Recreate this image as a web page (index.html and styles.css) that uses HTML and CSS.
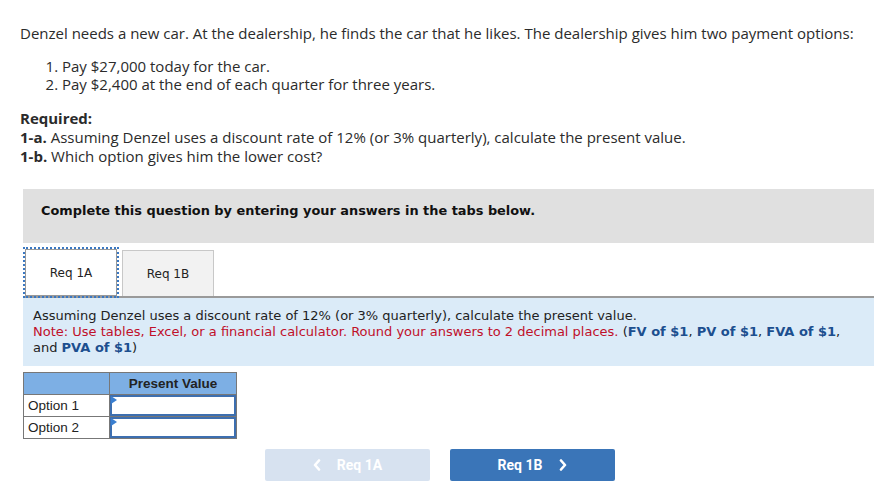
FILE: index.html
```html
<!DOCTYPE html>
<html>
<head>
<meta charset="utf-8">
<link rel="stylesheet" href="styles.css">
</head>
<body>
<div class="page">
  <p class="intro">Denzel needs a new car. At the dealership, he finds the car that he likes. The dealership gives him two payment options:</p>
  <ol class="options">
    <li>Pay $27,000 today for the car.</li>
    <li>Pay $2,400 at the end of each quarter for three years.</li>
  </ol>
  <div class="required">
    <div class="req-title">Required:</div>
    <div><b>1-a.</b> Assuming Denzel uses a discount rate of 12% (or 3% quarterly), calculate the present value.</div>
    <div><b>1-b.</b> Which option gives him the lower cost?</div>
  </div>

  <div class="work">
    <div class="banner">Complete this question by entering your answers in the tabs below.</div>
    <div class="tabs">
      <div class="tab active">Req 1A</div>
      <div class="tab">Req 1B</div>
    </div>
    <div class="panel">
      Assuming Denzel uses a discount rate of 12% (or 3% quarterly), calculate the present value.<br>
      <span class="note">Note: Use tables, Excel, or a financial calculator. Round your answers to 2 decimal places.</span> (<b class="link">FV of $1</b>, <b class="link">PV of $1</b>, <b class="link">FVA of $1</b>, and <b class="link">PVA of $1</b>)
    </div>
    <table class="grid">
      <tr class="head"><th class="c1"></th><th class="c2">Present Value</th></tr>
      <tr><td class="c1">Option 1</td><td class="c2 input"><span class="flag"></span></td></tr>
      <tr><td class="c1">Option 2</td><td class="c2 input"><span class="flag"></span></td></tr>
    </table>
    <div class="nav">
      <div class="btn prev"><svg class="chev" width="8" height="12" viewBox="0 0 8 12"><polyline points="6,1.5 2,6 6,10.5" fill="none" stroke="#fff" stroke-width="2.6" stroke-linecap="round" stroke-linejoin="round"/></svg>Req 1A</div>
      <div class="btn next">Req 1B<svg class="chev" width="8" height="12" viewBox="0 0 8 12"><polyline points="2,1.5 6,6 2,10.5" fill="none" stroke="#fff" stroke-width="2.6" stroke-linecap="round" stroke-linejoin="round"/></svg></div>
    </div>
  </div>
</div>
</body>
</html>
```
FILE: styles.css
```css
html, body { margin: 0; padding: 0; background: #fff; }
.page {
  padding: 22px 12px 0 20px;
  font-family: "Open Sans", "Liberation Sans", sans-serif;
  font-size: 15px;
  color: #2b2b2b;
}
.intro { margin: 0; line-height: 22px; }
.options { margin: 13px 0 0; padding-left: 42px; line-height: 18px; }
.required { margin-top: 16px; line-height: 19px; }
.req-title { font-weight: bold; }
.required b { font-weight: bold; }

.work { margin: 23px 0 0 3px; font-family: "DejaVu Sans", Verdana, sans-serif; font-size: 13px; }
.banner {
  background: #e0e0e0;
  height: 54px;
  box-sizing: border-box;
  padding: 14px 0 0 18px;
  font-weight: bold;
  color: #111;
  font-size: 12.9px;
}
.tabs { display: flex; margin-top: 6px; border-bottom: 2px solid #9a9a9a; height: 47px; align-items: flex-end; }
.tab {
  width: 92px; height: 46px;
  box-sizing: border-box;
  display: flex; align-items: center; justify-content: center;
  background: #f2f2f2; border: 1px solid #c8c8c8; border-bottom: none;
  color: #222; font-size: 12px;
  margin-right: 1px;
}
.tab.active {
  background: #fff;
  border: 1px solid #999;
  outline: 2px dotted #3a78c2;
  outline-offset: 0;
  width: 92px; height: 47px;
  margin-left: 2px; margin-right: 5px;
}
.panel {
  background: #dbebf8;
  padding: 10px 20px 10px 10px;
  line-height: 16px;
  color: #222;
  font-size: 13px;
}
.note { color: #c0102a; }
.link { color: #1c4f8f; }

.grid { border-collapse: collapse; margin-top: 6px; font-family: "Liberation Sans", Arial, sans-serif; font-size: 13.5px; }
.grid th, .grid td { border: 1px solid #777; padding: 0; }
.grid .c1 { width: 86px; padding-left: 4px; height: 22px; box-sizing: border-box; }
.grid .c2 { width: 126px; }
.grid tr.head th { background: #7dafe4; height: 21px; font-weight: bold; color: #222; }
.grid td { color: #222; }
.grid td.input { position: relative; box-shadow: inset 0 0 0 2px #3d6fb0; background: #fff; }
.flag {
  position: absolute; top: 1px; left: 1px;
  width: 0; height: 0;
  border-top: 4px solid transparent; border-bottom: 4px solid transparent;
  border-left: 6px solid #3a7fd0;
}

.nav { display: flex; gap: 20px; margin: 10px 0 0 242px; }
.btn {
  width: 165px; height: 32px; border-radius: 2px;
  display: flex; align-items: center; justify-content: center;
  color: #fff; font-family: "Roboto", "Liberation Sans", sans-serif; font-weight: bold; font-size: 14px;
}
.btn.prev { background: #d7e2f0; }
.btn.next { background: #3a75b8; }
.prev .chev { margin-right: 16px; }
.next .chev { margin-left: 17px; }
```
